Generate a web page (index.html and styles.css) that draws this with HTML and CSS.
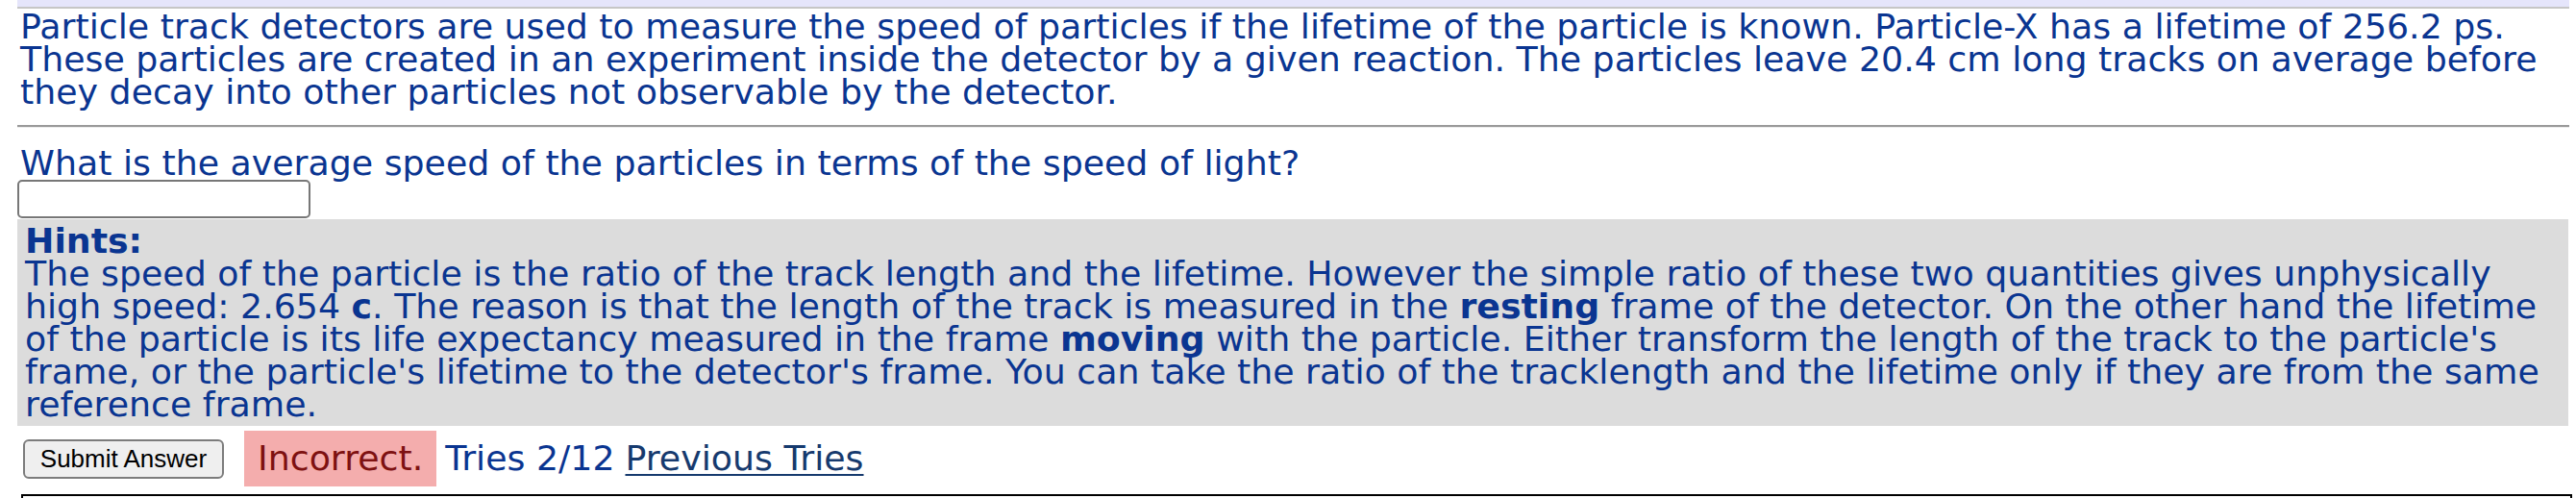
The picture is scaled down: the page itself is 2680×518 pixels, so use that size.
FILE: index.html
```html
<!DOCTYPE html>
<html>
<head>
<meta charset="utf-8">
<link rel="stylesheet" href="styles.css">
</head>
<body>
<div class="main">
  <div class="band"></div>
  <p class="intro">Particle track detectors are used to measure the speed of particles if the lifetime of the particle is known. Particle-X has a lifetime of 256.2 ps. These particles are created in an experiment inside the detector by a given reaction. The particles leave 20.4 cm long tracks on average before they decay into other particles not observable by the detector.</p>
  <hr class="rule">
  <p class="question">What is the average speed of the particles in terms of the speed of light?</p>
  <input class="answer" type="text">
  <div class="hints">
    <div class="hints-title">Hints:</div>
    <div class="hints-text">The speed of the particle is the ratio of the track length and the lifetime. However the simple ratio of these two quantities gives unphysically high speed: 2.654 <b>c</b>. The reason is that the length of the track is measured in the <b>resting</b> frame of the detector. On the other hand the lifetime of the particle is its life expectancy measured in the frame <b>moving</b> with the particle. Either transform the length of the track to the particle's frame, or the particle's lifetime to the detector's frame. You can take the ratio of the tracklength and the lifetime only if they are from the same reference frame.</div>
  </div>
  <div class="submit-row">
    <button class="submit" type="button">Submit Answer</button>
    <span class="incorrect">Incorrect.</span>
    <span class="tries">Tries 2/12</span>
    <a class="prev" href="#">Previous Tries</a>
  </div>
  <div class="next-box"></div>
</div>
</body>
</html>
```

FILE: styles.css
```css
html, body {
  margin: 0;
  padding: 0;
  background: #ffffff;
}
body {
  font-family: "DejaVu Sans", Verdana, sans-serif;
  font-size: 36.3px;
  line-height: 34px;
  color: #0a3591;
  overflow: hidden;
}
.main {
  margin-left: 18px;
  width: 2655px;
}
.band {
  height: 7px;
  background: #e5e5fb;
  border-bottom: 2px solid #c6c6c6;
}
.intro {
  margin: 0;
  padding: 2px 0 0 3px;
}
.rule {
  margin: 17px 0 0 0;
  height: 0;
  border: 0;
  border-top: 2px solid #9a9a9a;
  border-bottom: 1px solid #ececec;
}
.question {
  margin: 20px 0 0 0;
  padding-left: 3px;
}
.answer {
  display: block;
  box-sizing: border-box;
  width: 305px;
  height: 40px;
  margin: 0;
  border: 2px solid #777777;
  border-radius: 5px;
  background: #ffffff;
  padding: 0 6px;
}
.hints {
  margin-top: 1px;
  width: 2654px;
  box-sizing: border-box;
  background: #dcdcdc;
  padding: 6px 0 5px 8px;
}
.hints-title {
  font-weight: bold;
}
.submit-row {
  display: flex;
  align-items: center;
  height: 58px;
  margin-top: 5px;
  white-space: nowrap;
}
.submit {
  box-sizing: border-box;
  width: 209px;
  height: 41px;
  margin-left: 6px;
  padding: 0;
  font-family: "Liberation Sans", Arial, sans-serif;
  font-size: 26px;
  color: #000000;
  background: #efefef;
  border: 2px solid #7c7c7c;
  border-radius: 6px;
}
.incorrect {
  display: flex;
  align-items: center;
  height: 58px;
  margin-left: 21px;
  padding: 0 14px;
  background: #f4adad;
  color: #7e1111;
}
.tries {
  margin-left: 9px;
}
.prev {
  margin-left: 11px;
  color: #163a6e;
  text-decoration: underline;
  text-decoration-thickness: 2px;
  text-underline-offset: 4px;
}
.next-box {
  margin: 8px 0 0 4px;
  width: 2654px;
  height: 4px;
  border: 2px solid #000000;
  border-bottom: 0;
  box-sizing: border-box;
}
```
